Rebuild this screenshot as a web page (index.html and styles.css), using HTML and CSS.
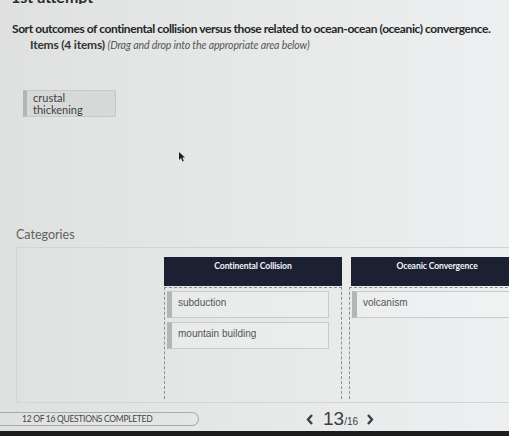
FILE: index.html
```html
<!DOCTYPE html>
<html>
<head>
<meta charset="utf-8">
<link rel="stylesheet" href="styles.css">
</head>
<body>
<div class="page">
  <div class="attempt"><span>1st attempt</span></div>
  <div class="title">Sort outcomes of continental collision versus those related to ocean-ocean (oceanic) convergence.</div>
  <div class="items-line">Items (4 items) <em>(Drag and drop into the appropriate area below)</em></div>
  <div class="holder">
    <div class="chip">crustal<br>thickening</div>
    <svg class="cursor" width="7" height="10" viewBox="0 0 7 10"><path d="M0 0 L0 8 L2 6 L3.5 9.5 L4.8 9 L3.4 5.6 L6 5.6 Z" fill="#1e1e28"/></svg>
  </div>
  <div class="cat-label">Categories</div>
  <div class="cat-area">
    <div class="col col1">
      <div class="head">Continental Collision</div>
      <div class="zone">
        <div class="item">subduction</div>
        <div class="item">mountain building</div>
      </div>
    </div>
    <div class="col col2">
      <div class="head">Oceanic Convergence</div>
      <div class="zone">
        <div class="item">volcanism</div>
      </div>
    </div>
  </div>
  <div class="footer">
    <div class="progress">12 OF 16 QUESTIONS COMPLETED</div>
    <div class="pager">
      <svg class="chev" width="8" height="11" viewBox="0 0 8 11"><path d="M6 1 L2 5.5 L6 10" fill="none" stroke="#3c3f44" stroke-width="2.4"/></svg>
      <span class="num">13</span><span class="tot">/16</span>
      <svg class="chev next" width="8" height="11" viewBox="0 0 8 11"><path d="M2 1 L6 5.5 L2 10" fill="none" stroke="#3c3f44" stroke-width="2.4"/></svg>
    </div>
  </div>
  <div class="bar"></div>
</div>
</body>
</html>
```
FILE: styles.css
```css
html, body {
  margin: 0;
  padding: 0;
}
body {
  width: 509px;
  height: 436px;
  overflow: hidden;
  background: linear-gradient(90deg, #dfe1e0 0%, #e6e8e8 45%, #edeff0 100%);
  font-family: Lato, "Liberation Sans", sans-serif;
  color: #2a2a2a;
}
.page {
  display: flex;
  flex-direction: column;
  height: 436px;
}
.attempt {
  height: 4px;
  overflow: hidden;
  display: flex;
  align-items: flex-end;
  padding-left: 11px;
}
.attempt span {
  font-size: 16px;
  font-weight: 700;
  line-height: 16px;
  margin-bottom: -1px;
  color: #2c2c2c;
  flex: none;
}
.title {
  margin-top: 17px;
  padding-left: 12px;
  font-size: 12px;
  font-weight: 700;
  line-height: 15px;
  letter-spacing: -0.42px;
  white-space: nowrap;
  color: #262626;
}
.items-line {
  margin-top: 2px;
  padding-left: 30px;
  font-size: 12px;
  font-weight: 700;
  line-height: 14px;
  letter-spacing: -0.2px;
  color: #333;
  white-space: nowrap;
}
.items-line em {
  font-weight: 400;
  font-size: 10.6px;
  color: #555;
  letter-spacing: -0.15px;
}
.holder {
  position: relative;
  height: 175px;
  padding: 38px 0 0 23px;
  box-sizing: border-box;
}
.chip {
  width: 93px;
  height: 27px;
  box-sizing: border-box;
  background: #d6d9d8;
  border: 1px solid #c6c9c9;
  border-left: 4px solid #b1b5b5;
  padding: 1px 0 0 6px;
  font-size: 11px;
  line-height: 12px;
  color: #3e3e3e;
}
.cursor {
  position: absolute;
  left: 179px;
  top: 100px;
}
.cat-label {
  padding-left: 16px;
  font-size: 12.5px;
  line-height: 15px;
  color: #606262;
  height: 20px;
}
.cat-area {
  margin-left: 16px;
  height: 156px;
  box-sizing: border-box;
  border: 1px solid #d2d5d5;
  border-right: none;
  display: flex;
  gap: 9px;
  padding: 9px 0 0 147px;
  overflow: hidden;
}
.col {
  flex: none;
  display: flex;
  flex-direction: column;
}
.col1 {
  width: 178px;
}
.col2 {
  width: 172px;
}
.head {
  height: 29px;
  background: #1b2133;
  color: #f4f4f6;
  font-size: 8.6px;
  font-weight: 700;
  text-align: center;
  padding-top: 4px;
  box-sizing: border-box;
  letter-spacing: -0.1px;
}
.zone {
  margin-top: 1px;
  height: 112px;
  box-sizing: border-box;
  border: 1px dashed #8c8f90;
  border-bottom: none;
  padding: 3px 12px 0 2px;
  display: flex;
  flex-direction: column;
  gap: 4px;
}
.col2 .zone {
  padding-right: 0;
  margin-left: -2px;
}
.item {
  height: 27px;
  box-sizing: border-box;
  border: 1px solid #c7cbcb;
  border-left: 5px solid #b2b6b6;
  background: rgba(255, 255, 255, 0.18);
  padding: 5px 0 0 6px;
  font-family: "Liberation Sans", Arial, sans-serif;
  font-size: 10px;
  line-height: 12px;
  color: #555;
}
.footer {
  margin-top: 6px;
  height: 20px;
  display: flex;
  align-items: center;
}
.progress {
  width: 199px;
  height: 14px;
  box-sizing: border-box;
  border: 1px solid #a8abab;
  border-left: none;
  border-radius: 0 8px 8px 0;
  padding-left: 22px;
  font-size: 8.5px;
  line-height: 12px;
  letter-spacing: -0.3px;
  color: #444;
  white-space: nowrap;
}
.pager {
  margin-left: 107px;
  display: flex;
  align-items: baseline;
  color: #3c3f44;
}
.chev {
  align-self: center;
  margin-right: 9px;
}
.chev.next {
  margin-left: 8px;
  margin-right: 0;
}
.num {
  font-size: 19px;
  line-height: 20px;
  font-family: "Liberation Sans", Arial, sans-serif;
}
.tot {
  font-size: 10px;
  font-family: "Liberation Sans", Arial, sans-serif;
}
.bar {
  margin-top: auto;
  height: 5px;
  background: #1c1c1e;
}
```
